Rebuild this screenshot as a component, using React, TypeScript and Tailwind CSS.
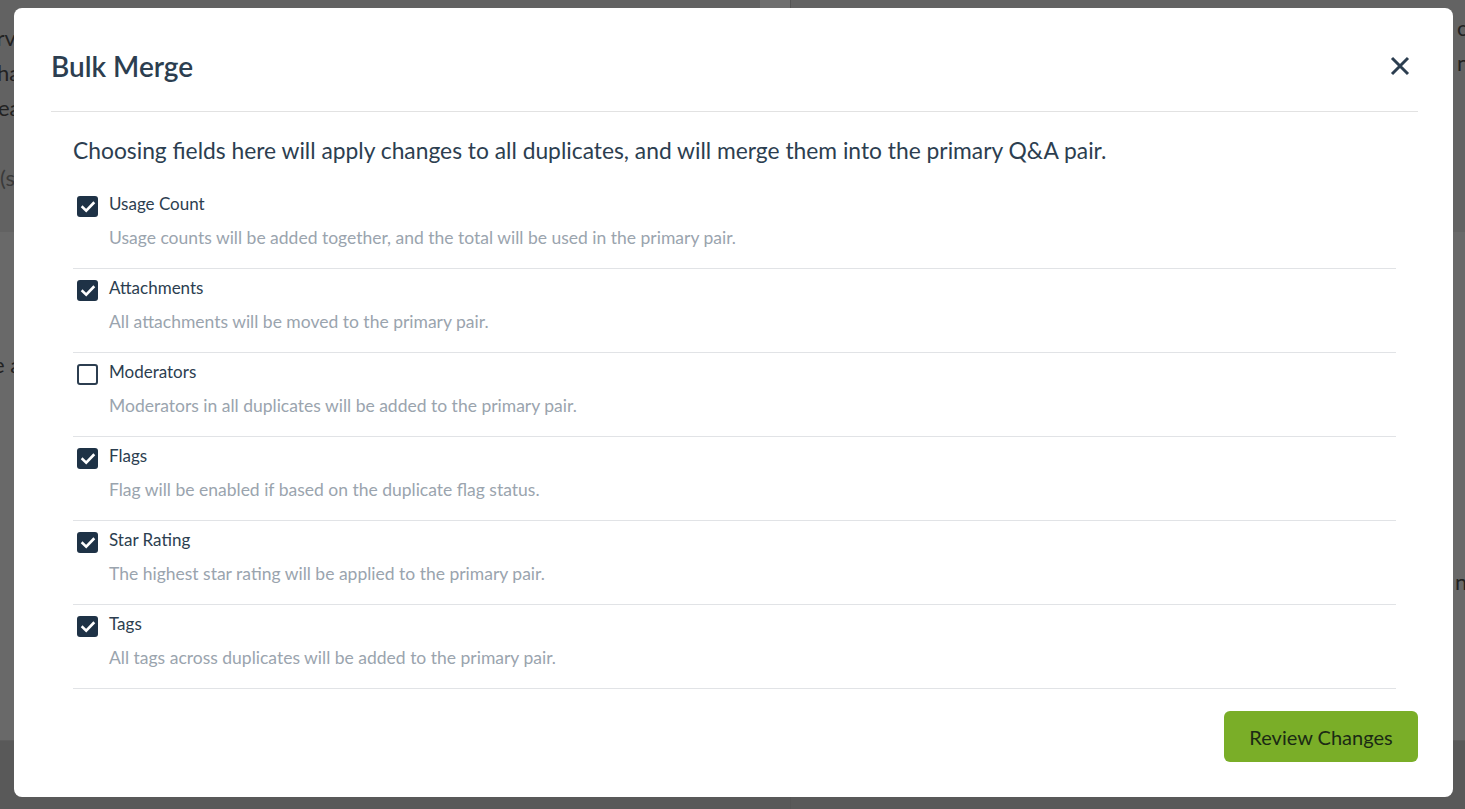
import { useState } from 'react';

type Field = { key: string; label: string; description: string; checked: boolean };

const FIELDS: Field[] = [
  { key: 'usage', label: 'Usage Count', description: 'Usage counts will be added together, and the total will be used in the primary pair.', checked: true },
  { key: 'attachments', label: 'Attachments', description: 'All attachments will be moved to the primary pair.', checked: true },
  { key: 'moderators', label: 'Moderators', description: 'Moderators in all duplicates will be added to the primary pair.', checked: false },
  { key: 'flags', label: 'Flags', description: 'Flag will be enabled if based on the duplicate flag status.', checked: true },
  { key: 'rating', label: 'Star Rating', description: 'The highest star rating will be applied to the primary pair.', checked: true },
  { key: 'tags', label: 'Tags', description: 'All tags across duplicates will be added to the primary pair.', checked: true },
];

function Checkbox({ checked, onChange }: { checked: boolean; onChange: () => void }) {
  return (
    <button
      type="button"
      onClick={onChange}
      className={
        checked
          ? 'mt-[4px] flex h-[21px] w-[21px] shrink-0 items-center justify-center rounded-[3px] bg-[#1e3246]'
          : 'mt-[4px] flex h-[21px] w-[21px] shrink-0 items-center justify-center rounded-[3px] border-2 border-[#2c3e50] bg-white'
      }
    >
      {checked && (
        <svg width="16" height="16" viewBox="0 0 16 16" fill="none">
          <path d="M2.6 8.2 6.2 11.6 13.4 4.2" stroke="white" strokeWidth="2.6" strokeLinecap="square" />
        </svg>
      )}
    </button>
  );
}

function Background() {
  return (
    <div className="flex h-[809px] w-full text-[22px] leading-[35px] text-[#222]">
      <div className="flex w-[760px] shrink-0 flex-col">
        <div className="h-[232px] overflow-hidden bg-[#626262] pt-[20px]">
          <p className="-ml-[27px]">Serv</p>
          <p className="-ml-[3px]">ha</p>
          <p className="-ml-[2px]">ea</p>
          <p className="mt-[35px] text-[#3a3a3a]">(s)</p>
        </div>
        <div className="h-[508px] bg-[#696969] pt-[115px]">
          <p className="-ml-[7px]">e a</p>
        </div>
        <div className="flex-1 border-t border-[#5e5e5e] bg-[#595959]" />
      </div>
      <div className="flex w-[30px] shrink-0 flex-col">
        <div className="h-[232px] bg-[#6f6f6f]" />
        <div className="h-[508px] bg-[#696969]" />
        <div className="flex-1 bg-[#595959]" />
      </div>
      <div className="flex min-w-0 flex-1 flex-col border-l border-[#555]">
        <div className="h-[232px] overflow-hidden bg-[#636363] pt-[10px]">
          <p className="pl-[666px]">co</p>
          <p className="pl-[666px]">nt</p>
        </div>
        <div className="h-[508px] bg-[#696969] pt-[332px]">
          <p className="pl-[664px]">n</p>
        </div>
        <div className="flex-1 border-t border-[#5e5e5e] bg-[#595959]" />
      </div>
    </div>
  );
}

export default function App() {
  const [fields, setFields] = useState(FIELDS);

  const toggle = (key: string) => {
    setFields((prev) => prev.map((f) => (f.key === key ? { ...f, checked: !f.checked } : f)));
  };

  return (
    <div className="relative h-[809px] w-full overflow-hidden font-['Lato','Noto_Sans',sans-serif]">
      <Background />

      <div className="absolute left-[14px] top-[8px] flex h-[789px] w-[1439px] flex-col rounded-lg bg-white pl-[37px] pr-[35px]">
        <div className="flex items-start justify-between border-b border-[#e2e2e2] pb-[27px] pt-[40px]">
          <h2 className="text-[28px] font-semibold leading-[36px] text-[#2c3e50]">Bulk Merge</h2>
          <button type="button" className="mr-[8px] mt-[8px] text-[#2c3e50]">
            <svg width="20" height="20" viewBox="0 0 20 20" fill="none">
              <path d="M2 2 18 18M18 2 2 18" stroke="currentColor" strokeWidth="3" />
            </svg>
          </button>
        </div>

        <div className="px-[22px] pt-[23px]">
          <p className="mb-[20px] text-[22.8px] leading-[30px] text-[#2c3e50]">
            Choosing fields here will apply changes to all duplicates, and will merge them into the primary Q&amp;A pair.
          </p>

          {fields.map((f) => (
            <div key={f.key} className="border-b border-[#e1e3e6] pb-[18px] pt-[7px]">
              <div className="flex gap-[11px] pl-[4px]">
                <Checkbox checked={f.checked} onChange={() => toggle(f.key)} />
                <div className="flex flex-col gap-[10px]">
                  <span className="text-[17px] leading-[24px] text-[#2c3e50]">{f.label}</span>
                  <span className="text-[17.5px] leading-[24px] text-[#9aa4ae]">{f.description}</span>
                </div>
              </div>
            </div>
          ))}
        </div>

        <div className="flex justify-end pt-[22px]">
          <button
            type="button"
            className="h-[51px] w-[194px] rounded-md bg-[#7aae28] text-[20px] text-[#1b2a14]"
          >
            Review Changes
          </button>
        </div>
      </div>
    </div>
  );
}
